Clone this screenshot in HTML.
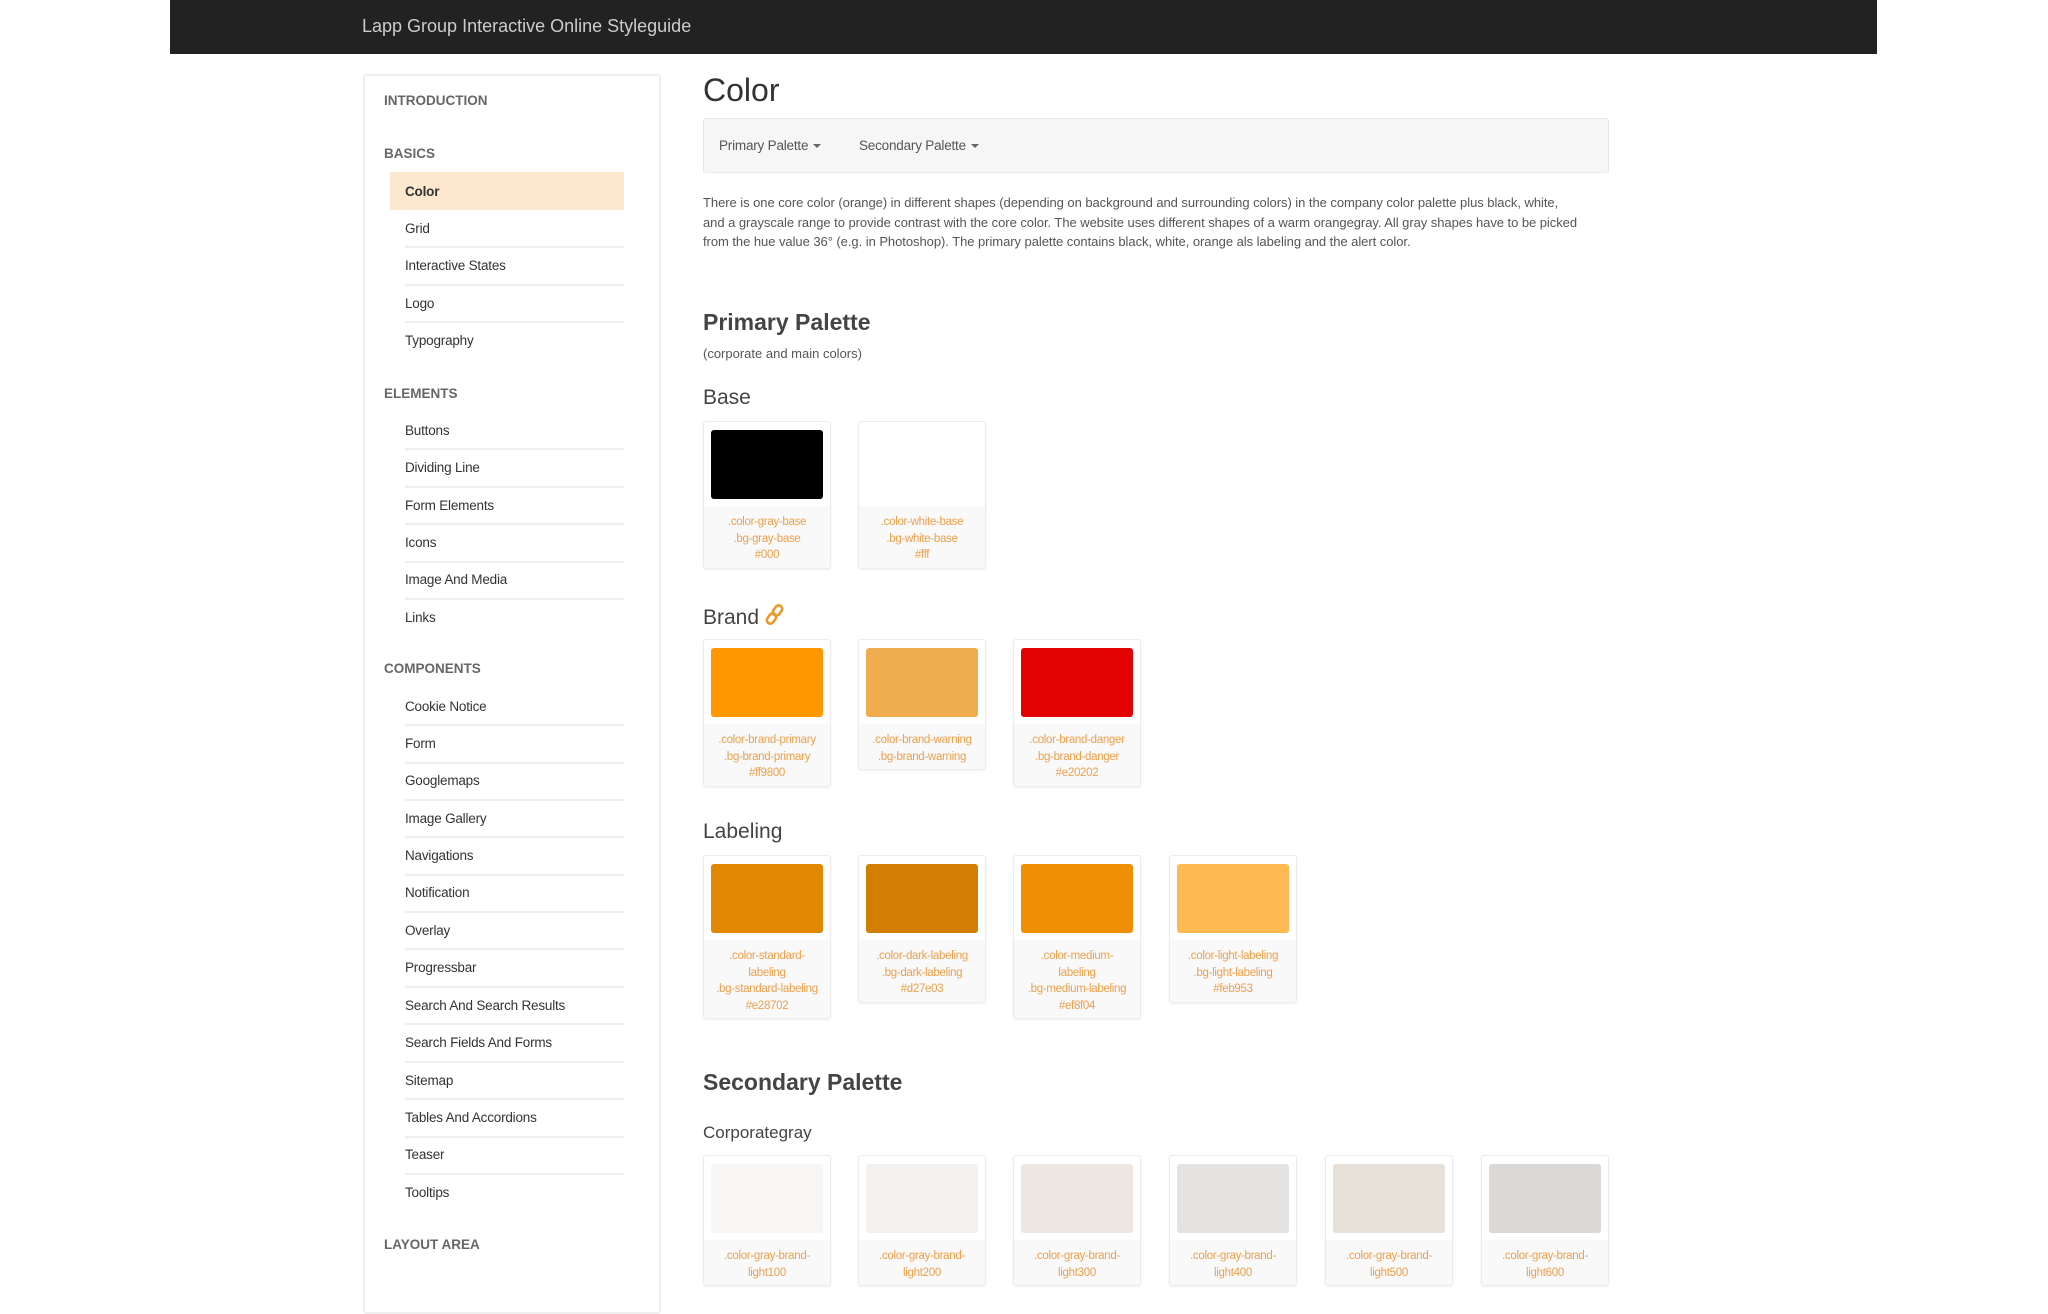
<!DOCTYPE html>
<html><head><meta charset="utf-8"><style>
*{margin:0;padding:0;box-sizing:border-box}
body{width:2048px;height:1280px;overflow:hidden;background:#fff;font-family:"Liberation Sans",sans-serif;color:#444;position:relative}
.a{position:absolute;white-space:nowrap}
#hdr{left:170px;top:0;width:1707px;height:54px;background:#222}
#hdr span{position:absolute;left:192px;top:16px;color:#ccc;font-size:18px}
#side{left:363px;top:74px;width:298px;height:1240px;border:2px solid #eee;border-radius:3px;background:#fff}
.sh{font-size:13.5px;color:#666;left:384px;font-weight:bold}
.si{font-size:13.5px;color:#333;left:405px;letter-spacing:-0.2px}
.ln{left:405px;width:219px;height:2px;background:#eee}
h1{position:absolute;left:703px;top:72px;font-size:32px;font-weight:normal;color:#333}
#nav{left:703px;top:118px;width:906px;height:55px;background:#f6f6f6;border:1px solid #e8e8e8;border-radius:3px;font-size:13.5px;color:#555;letter-spacing:-0.2px}
.car{display:inline-block;border-left:4px solid transparent;border-right:4px solid transparent;border-top:4px solid #666;vertical-align:middle;margin-left:5px}
p.t{position:absolute;left:703px;top:193px;width:880px;font-size:13px;line-height:19.6px;color:#555;letter-spacing:-0.05px}
.h2{font-size:23px;font-weight:bold;color:#444;left:703px}
.h3{font-size:21px;color:#444;left:703px}
.card{position:absolute;width:128px;background:#f9f9f9;border:1px solid #ececec;border-radius:3px;box-shadow:0 1px 2px rgba(0,0,0,.06)}
.card .sw{height:84px;background:#fff;padding:8px 7px 0 7px;border-radius:3px 3px 0 0}
.card .sw div{height:69px;border-radius:3px}
.card .lb{text-align:center;font-size:11.5px;line-height:16.5px;color:#eba04c;padding:8px 2px 4px;letter-spacing:-0.3px}
</style></head><body>
<div id="hdr" class="a"><span>Lapp Group Interactive Online Styleguide</span></div>
<div id="side" class="a"></div>
<div class="a sh" style="top:93px">INTRODUCTION</div>
<div class="a sh" style="top:146px">BASICS</div>
<div class="a" style="left:390px;top:172px;width:234px;height:38px;background:#fde8cf"></div>
<div class="a si" style="top:184px;font-weight:bold">Color</div>
<div class="a si" style="top:221px">Grid</div><div class="a ln" style="top:246px"></div>
<div class="a si" style="top:258px">Interactive States</div><div class="a ln" style="top:284px"></div>
<div class="a si" style="top:296px">Logo</div><div class="a ln" style="top:321px"></div>
<div class="a si" style="top:333px">Typography</div>
<div class="a sh" style="top:386px">ELEMENTS</div>
<div class="a si" style="top:423px">Buttons</div><div class="a ln" style="top:448px"></div>
<div class="a si" style="top:460px">Dividing Line</div><div class="a ln" style="top:486px"></div>
<div class="a si" style="top:498px">Form Elements</div><div class="a ln" style="top:523px"></div>
<div class="a si" style="top:535px">Icons</div><div class="a ln" style="top:561px"></div>
<div class="a si" style="top:572px">Image And Media</div><div class="a ln" style="top:598px"></div>
<div class="a si" style="top:610px">Links</div>
<div class="a sh" style="top:661px">COMPONENTS</div>
<div class="a si" style="top:699px">Cookie Notice</div><div class="a ln" style="top:724px"></div>
<div class="a si" style="top:736px">Form</div><div class="a ln" style="top:762px"></div>
<div class="a si" style="top:773px">Googlemaps</div><div class="a ln" style="top:799px"></div>
<div class="a si" style="top:811px">Image Gallery</div><div class="a ln" style="top:836px"></div>
<div class="a si" style="top:848px">Navigations</div><div class="a ln" style="top:874px"></div>
<div class="a si" style="top:885px">Notification</div><div class="a ln" style="top:911px"></div>
<div class="a si" style="top:923px">Overlay</div><div class="a ln" style="top:948px"></div>
<div class="a si" style="top:960px">Progressbar</div><div class="a ln" style="top:986px"></div>
<div class="a si" style="top:998px">Search And Search Results</div><div class="a ln" style="top:1023px"></div>
<div class="a si" style="top:1035px">Search Fields And Forms</div><div class="a ln" style="top:1061px"></div>
<div class="a si" style="top:1073px">Sitemap</div><div class="a ln" style="top:1098px"></div>
<div class="a si" style="top:1110px">Tables And Accordions</div><div class="a ln" style="top:1136px"></div>
<div class="a si" style="top:1147px">Teaser</div><div class="a ln" style="top:1173px"></div>
<div class="a si" style="top:1185px">Tooltips</div>
<div class="a sh" style="top:1237px">LAYOUT AREA</div>

<h1>Color</h1>
<div id="nav" class="a"><span style="position:absolute;left:15px;top:19px">Primary Palette<span class="car"></span></span><span style="position:absolute;left:155px;top:19px">Secondary Palette<span class="car"></span></span></div>
<p class="t">There is one core color (orange) in different shapes (depending on background and surrounding colors) in the company color palette plus black, white, and a grayscale range to provide contrast with the core color. The website uses different shapes of a warm orangegray. All gray shapes have to be picked from the hue value 36° (e.g. in Photoshop). The primary palette contains black, white, orange als labeling and the alert color.</p>

<div class="a h2" style="top:309px">Primary Palette</div>
<div class="a" style="left:703px;top:346px;font-size:13px;color:#555">(corporate and main colors)</div>
<div class="a h3" style="top:386px">Base</div>
<div class="card" style="left:703px;top:421px"><div class="sw"><div style="background:#000"></div></div><div class="lb">.color-gray-base<br>.bg-gray-base<br>#000</div></div>
<div class="card" style="left:858px;top:421px"><div class="sw"><div style="background:#fff"></div></div><div class="lb">.color-white-base<br>.bg-white-base<br>#fff</div></div>

<div class="a h3" style="top:604px">Brand <svg width="20" height="22" viewBox="0 0 20 22" style="vertical-align:-2px"><g fill="none" stroke="#eb9a2a" stroke-width="2.6"><rect x="9" y="1" width="7" height="11" rx="3.5" transform="rotate(35 12.5 6.5)"/><rect x="3" y="9" width="7" height="11" rx="3.5" transform="rotate(35 6.5 14.5)"/></g></svg></div>
<div class="card" style="left:703px;top:639px"><div class="sw"><div style="background:#ff9800"></div></div><div class="lb">.color-brand-primary<br>.bg-brand-primary<br>#ff9800</div></div>
<div class="card" style="left:858px;top:639px"><div class="sw"><div style="background:#efad50"></div></div><div class="lb">.color-brand-warning<br>.bg-brand-warning</div></div>
<div class="card" style="left:1013px;top:639px"><div class="sw"><div style="background:#e20202"></div></div><div class="lb">.color-brand-danger<br>.bg-brand-danger<br>#e20202</div></div>

<div class="a h3" style="top:820px">Labeling</div>
<div class="card" style="left:703px;top:855px"><div class="sw"><div style="background:#e28702"></div></div><div class="lb">.color-standard-<br>labeling<br>.bg-standard-labeling<br>#e28702</div></div>
<div class="card" style="left:858px;top:855px"><div class="sw"><div style="background:#d27e03"></div></div><div class="lb">.color-dark-labeling<br>.bg-dark-labeling<br>#d27e03</div></div>
<div class="card" style="left:1013px;top:855px"><div class="sw"><div style="background:#ef8f04"></div></div><div class="lb">.color-medium-<br>labeling<br>.bg-medium-labeling<br>#ef8f04</div></div>
<div class="card" style="left:1169px;top:855px"><div class="sw"><div style="background:#feb953"></div></div><div class="lb">.color-light-labeling<br>.bg-light-labeling<br>#feb953</div></div>

<div class="a h2" style="top:1069px">Secondary Palette</div>
<div class="a" style="left:703px;top:1123px;font-size:17px;color:#444">Corporategray</div>
<div class="card" style="left:703px;top:1155px"><div class="sw"><div style="background:#f8f6f5"></div></div><div class="lb">.color-gray-brand-<br>light100</div></div>
<div class="card" style="left:858px;top:1155px"><div class="sw"><div style="background:#f3f1ef"></div></div><div class="lb">.color-gray-brand-<br>light200</div></div>
<div class="card" style="left:1013px;top:1155px"><div class="sw"><div style="background:#ede7e2"></div></div><div class="lb">.color-gray-brand-<br>light300</div></div>
<div class="card" style="left:1169px;top:1155px"><div class="sw"><div style="background:#e4e3e1"></div></div><div class="lb">.color-gray-brand-<br>light400</div></div>
<div class="card" style="left:1325px;top:1155px"><div class="sw"><div style="background:#e6e0d9"></div></div><div class="lb">.color-gray-brand-<br>light500</div></div>
<div class="card" style="left:1481px;top:1155px"><div class="sw"><div style="background:#dad9d8"></div></div><div class="lb">.color-gray-brand-<br>light600</div></div>
</body></html>
